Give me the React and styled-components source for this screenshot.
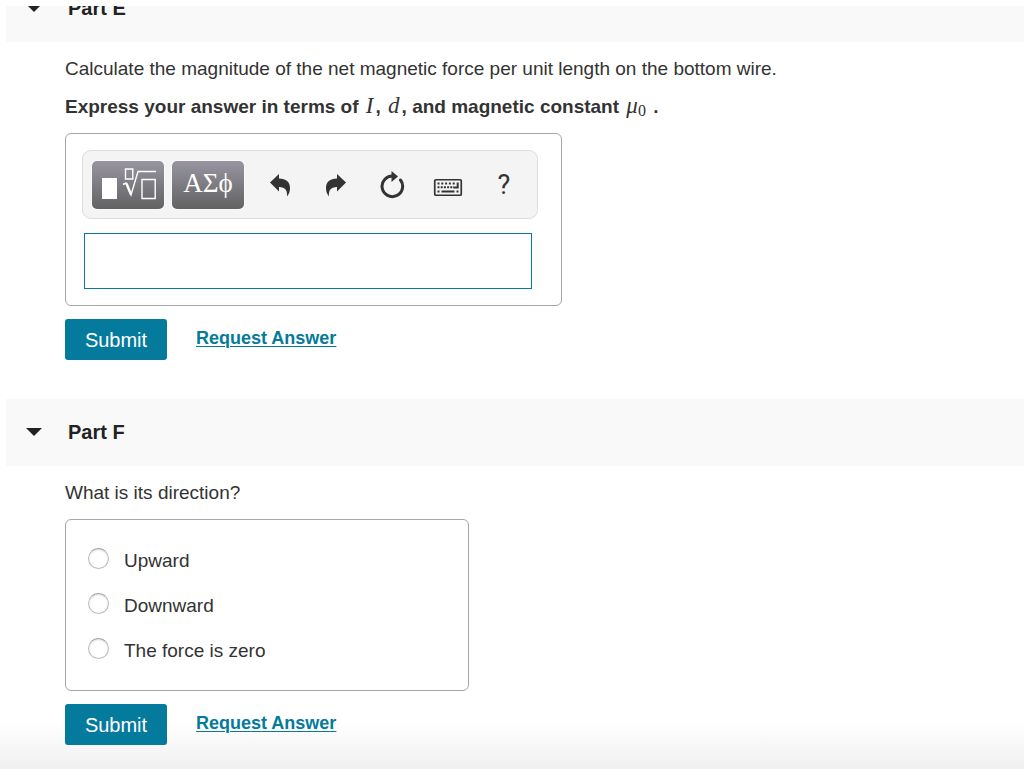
import React from "react";
import styled, { createGlobalStyle } from "styled-components";

const GlobalStyle = createGlobalStyle`
  *, *::before, *::after { box-sizing: border-box; }
  body {
    margin: 0;
    background: #fff;
    color: #333;
    font: 19px/24px "Liberation Sans", Arial, sans-serif;
  }
`;

const Page = styled.main`
  min-height: 100vh;
  padding: 6px 0 24px 6px;
  background: linear-gradient(to bottom, #fff, #f0f0f0) bottom / 100% 48px no-repeat #fff;
`;

const HeaderClip = styled.div`
  display: flex;
  align-items: flex-end;
  height: ${(p) => (p.$scrolled ? "36px" : "auto")};
  overflow: hidden;
`;

const HeaderBar = styled.header`
  flex: 1;
  display: flex;
  align-items: center;
  height: 67px;
  padding: 0 0 2px 20px;
  background: #f9f9f9;
`;

const Toggle = styled.button`
  display: flex;
  align-items: center;
  gap: 26px;
  padding: 0;
  border: 0;
  background: none;
  color: #222;
  font: inherit;
`;

const Title = styled.h2`
  margin: 0;
  font-size: 20px;
  line-height: 24px;
`;

const Body = styled.section`
  padding: 15px 24px 39px 59px;

  &:last-child {
    padding-bottom: 0;
  }
`;

const Prompt = styled.p`
  margin: 0 0 14px;
`;

const Instruction = styled(Prompt)`
  font-weight: bold;
`;

const MathVar = styled.var`
  padding: 0 2px;
  font: italic 23px/20px "Liberation Serif", serif;

  sub {
    font-size: 16px;
    font-style: normal;
    line-height: 0;
    vertical-align: -3px;
  }
`;

const Panel = styled.div`
  max-width: ${(p) => p.$width};
  padding: 16px;
  border: 1px solid #a6a6a6;
  border-radius: 6px;
  background: #fff;
`;

const Toolbar = styled.div`
  display: flex;
  align-items: center;
  gap: 8px;
  max-width: 456px;
  height: 69px;
  padding-left: 9px;
  border: 1px solid #ddd;
  border-radius: 9px;
  background: #f4f4f4;
`;

const PaletteButton = styled.button`
  display: flex;
  align-items: center;
  justify-content: center;
  width: 72px;
  height: 48px;
  padding: 0 0 4px;
  border: 0;
  border-radius: 5px;
  background: linear-gradient(#9895a1, #626262);
  box-shadow: 0 0 0 1px #fafafa;
  color: #fff;
  font: 27px/32px "Liberation Serif", serif;
`;

const Tools = styled.div`
  display: flex;
`;

const ToolButton = styled.button`
  display: flex;
  align-items: center;
  justify-content: center;
  width: 56px;
  height: 48px;
  padding: 0;
  border: 0;
  background: none;
  color: #333;
  font: 27px/32px Roboto, sans-serif;
`;

const AnswerInput = styled.input`
  display: block;
  width: calc(100% - 15px);
  height: 56px;
  margin: 14px 0 0 2px;
  padding: 0 12px;
  border: 1px solid #077b9b;
  outline: 0;
  background: #fff;
  font: inherit;
`;

const Choices = styled.fieldset`
  display: grid;
  gap: 19px;
  min-width: 0;
  margin: 0;
  padding: 12px 6px 10px;
  border: 0;
`;

const Choice = styled.label`
  display: flex;
  align-items: flex-start;
  gap: 15px;
  line-height: 26px;
`;

const Radio = styled.input`
  appearance: none;
  width: 21px;
  height: 21px;
  margin: 0;
  border: 1px solid #bbb;
  border-top-color: #a0a0a0;
  border-radius: 50%;
  background: #fff;
  box-shadow: inset 0 1px 2px #ddd;

  &:checked {
    background: radial-gradient(#077b9b 5px, #fff 6px);
  }
`;

const Actions = styled.div`
  display: flex;
  align-items: center;
  gap: 29px;
  margin-top: 13px;
`;

const SubmitButton = styled.button`
  width: 102px;
  height: 41px;
  padding: 0;
  border: 0;
  border-radius: 3px;
  background: #047a9c;
  color: #fff;
  font: 20px/24px "Liberation Sans", Arial, sans-serif;
`;

const RequestLink = styled.a`
  padding-bottom: 3px;
  color: #047a9c;
  font-size: 18px;
  font-weight: bold;
  line-height: 24px;
  text-decoration: underline;
  text-decoration-thickness: 1px;
  text-underline-offset: 2px;
`;

function PartHeader({ title, scrolled }) {
  return (
    <HeaderClip $scrolled={scrolled}>
      <HeaderBar>
        <Toggle type="button" aria-expanded="true">
          <svg width="16" height="8" viewBox="0 0 16 8" aria-hidden="true">
            <path d="M0 0H16L8 8Z" fill="currentColor" />
          </svg>
          <Title>{title}</Title>
        </Toggle>
      </HeaderBar>
    </HeaderClip>
  );
}

function SubmitRow() {
  return (
    <Actions>
      <SubmitButton type="button">Submit</SubmitButton>
      <RequestLink href="#answer">Request Answer</RequestLink>
    </Actions>
  );
}

const TemplateIcon = () => (
  <svg width="56" height="34" viewBox="0 0 56 34" fill="none" stroke="#fff" aria-hidden="true">
    <path d="M2 12H17V33H2Z" fill="#fff" stroke="none" />
    <path d="M25.5 3H32.8V13H25.5Z" strokeWidth="1.4" />
    <path d="M23 18.5L26 17L31 29L38 5.5H56" strokeWidth="1.4" />
    <path d="M26.5 17.5L31 28.5" strokeWidth="2.4" />
    <path d="M42 13.5H55.2V32.5H42Z" strokeWidth="1.4" />
  </svg>
);

const ArrowIcon = ({ flip }) => (
  <svg width="22" height="24" viewBox="0 0 22 24" aria-hidden="true">
    <path
      d="M1 9.5L10 1V5.5C17 5.5 21 9 21 15C21 18.5 20 21 18 23.5C18.5 17.5 16.5 14 10 14V18.5Z"
      fill="currentColor"
      transform={flip ? "matrix(-1 0 0 1 22 0)" : undefined}
    />
  </svg>
);

const ResetIcon = () => (
  <svg width="26" height="28" viewBox="0 0 26 28" fill="none" aria-hidden="true">
    <path d="M14 5A10.3 10.3 0 1 0 21.500 9" stroke="currentColor" strokeWidth="3" strokeLinecap="round" />
    <path d="M12.500 0L19 5.500L12.500 11Z" fill="currentColor" />
  </svg>
);

const KeyboardIcon = () => (
  <svg width="30" height="24" viewBox="0 -4 30 24" fill="none" stroke="currentColor" aria-hidden="true">
    <rect x="1.75" y="2.75" width="26.5" height="15.5" rx="1" strokeWidth="1.7" />
    <path d="M4.5 6.5H22" strokeWidth="2" strokeDasharray="2 1.8" />
    <path d="M4.5 10.2H21" strokeWidth="2" strokeDasharray="2 1.2" />
    <path d="M4.5 14.5H6.5M8.5 14.5H21.5M23.5 14.5H25.5" strokeWidth="2" />
    <path d="M24.7 5.5V10.5H20.5" strokeWidth="2" />
  </svg>
);

export default function App() {
  return (
    <>
      <GlobalStyle />
      <Page>
        <PartHeader title="Part E" scrolled />
        <Body>
          <Prompt>
            Calculate the magnitude of the net magnetic force per unit length on the bottom wire.
          </Prompt>
          <Instruction>
            Express your answer in terms of <MathVar>I</MathVar>, <MathVar>d</MathVar>, and magnetic
            constant <MathVar>μ<sub>0</sub></MathVar> .
          </Instruction>
          <Panel $width="497px">
            <Toolbar role="toolbar" aria-label="Equation editor">
              <PaletteButton type="button" aria-label="Templates">
                <TemplateIcon />
              </PaletteButton>
              <PaletteButton type="button" aria-label="Greek symbols">ΑΣϕ</PaletteButton>
              <Tools>
                <ToolButton type="button" aria-label="Undo"><ArrowIcon /></ToolButton>
                <ToolButton type="button" aria-label="Redo"><ArrowIcon flip /></ToolButton>
                <ToolButton type="button" aria-label="Reset"><ResetIcon /></ToolButton>
                <ToolButton type="button" aria-label="Keyboard shortcuts"><KeyboardIcon /></ToolButton>
                <ToolButton type="button" aria-label="Help">?</ToolButton>
              </Tools>
            </Toolbar>
            <AnswerInput type="text" aria-label="Answer" />
          </Panel>
          <SubmitRow />
        </Body>

        <PartHeader title="Part F" />
        <Body>
          <Prompt id="direction">What is its direction?</Prompt>
          <Panel $width="404px">
            <Choices aria-labelledby="direction">
              {["Upward", "Downward", "The force is zero"].map((label) => (
                <Choice key={label}>
                  <Radio type="radio" name="direction" value={label} />
                  {label}
                </Choice>
              ))}
            </Choices>
          </Panel>
          <SubmitRow />
        </Body>
      </Page>
    </>
  );
}
